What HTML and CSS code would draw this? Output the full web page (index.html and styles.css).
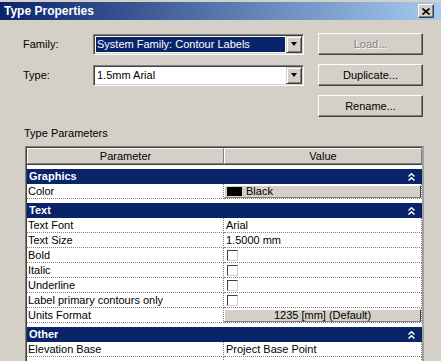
FILE: index.html
```html
<!DOCTYPE html>
<html>
<head>
<meta charset="utf-8">
<link rel="stylesheet" href="styles.css">
</head>
<body>
<div class="window">
  <div class="titlebar">
    <span class="title">Type Properties</span>
    <span class="close"><svg width="8" height="7" viewBox="0 0 8 7"><path d="M0.5 0.5 L7.5 6.5 M7.5 0.5 L0.5 6.5" stroke="#000" stroke-width="1.6" fill="none"/></svg></span>
  </div>
  <div class="form">
    <div class="lbl">Family:</div>
    <div class="combo"><div class="combo-text"><span class="sel">System Family: Contour Labels</span></div><div class="combo-btn"><span class="arrow"></span></div></div>
    <div class="btn disabled">Load...</div>
    <div class="lbl">Type:</div>
    <div class="combo"><div class="combo-text"><span class="plain">1.5mm Arial</span></div><div class="combo-btn"><span class="arrow"></span></div></div>
    <div class="btn">Duplicate...</div>
    <div></div>
    <div></div>
    <div class="btn">Rename...</div>
  </div>
  <div class="section-label">Type Parameters</div>
  <div class="grid">
    <div class="grid-head">
      <div class="hcell hparam">Parameter</div>
      <div class="hcell hvalue">Value</div>
    </div>
    <div class="group">
      <div class="group-head"><span>Graphics</span><svg class="chev" width="7" height="8" viewBox="0 0 7 8"><path d="M0.5 3.5 L3.5 0.8 L6.5 3.5 M0.5 7.5 L3.5 4.8 L6.5 7.5" stroke="#fff" stroke-width="1.5" fill="none"/></svg></div>
      <div class="row"><div class="pcell">Color</div><div class="vcell"><div class="vbtn left"><span class="swatch"></span>Black</div></div></div>
    </div>
    <div class="group">
      <div class="group-head"><span>Text</span><svg class="chev" width="7" height="8" viewBox="0 0 7 8"><path d="M0.5 3.5 L3.5 0.8 L6.5 3.5 M0.5 7.5 L3.5 4.8 L6.5 7.5" stroke="#fff" stroke-width="1.5" fill="none"/></svg></div>
      <div class="row"><div class="pcell">Text Font</div><div class="vcell">Arial</div></div>
      <div class="row"><div class="pcell">Text Size</div><div class="vcell">1.5000 mm</div></div>
      <div class="row"><div class="pcell">Bold</div><div class="vcell"><span class="check"></span></div></div>
      <div class="row"><div class="pcell">Italic</div><div class="vcell"><span class="check"></span></div></div>
      <div class="row"><div class="pcell">Underline</div><div class="vcell"><span class="check"></span></div></div>
      <div class="row"><div class="pcell">Label primary contours only</div><div class="vcell"><span class="check"></span></div></div>
      <div class="row"><div class="pcell">Units Format</div><div class="vcell"><div class="vbtn center">1235 [mm] (Default)</div></div></div>
    </div>
    <div class="group">
      <div class="group-head"><span>Other</span><svg class="chev" width="7" height="8" viewBox="0 0 7 8"><path d="M0.5 3.5 L3.5 0.8 L6.5 3.5 M0.5 7.5 L3.5 4.8 L6.5 7.5" stroke="#fff" stroke-width="1.5" fill="none"/></svg></div>
      <div class="row"><div class="pcell">Elevation Base</div><div class="vcell">Project Base Point</div></div>
      <div class="row"><div class="pcell"></div><div class="vcell"></div></div>
    </div>
  </div>
</div>
</body>
</html>
```
FILE: styles.css
```css
html, body {
  margin: 0;
  padding: 0;
}
body {
  background: #d4d0c8;
  font-family: "Liberation Sans", Arial, sans-serif;
  font-size: 11px;
  color: #000;
}
.window {
  width: 441px;
  height: 361px;
  overflow: hidden;
  background: #d4d0c8;
  padding-top: 2px;
  box-sizing: border-box;
}
.titlebar {
  height: 18px;
  background: linear-gradient(to right, #0a246a, #a6caf0);
  display: flex;
  align-items: center;
  justify-content: space-between;
  padding: 0 7px 0 4px;
}
.title {
  color: #fff;
  font-weight: bold;
  font-size: 12px;
  line-height: 18px;
}
.close {
  width: 16px;
  height: 14px;
  box-sizing: border-box;
  background: #d4d0c8;
  border-top: 1px solid #fff;
  border-left: 1px solid #fff;
  border-right: 1px solid #404040;
  border-bottom: 1px solid #404040;
  box-shadow: inset -1px -1px 0 #808080;
  display: flex;
  align-items: center;
  justify-content: center;
}
.close svg { display: block; margin-right: 1px; }

.form {
  display: grid;
  grid-template-columns: 56px 211px 105px;
  grid-template-rows: 22px 22px 22px;
  column-gap: 14px;
  row-gap: 9px;
  padding: 13px 0 0 23px;
  align-items: center;
}
.lbl {
  line-height: 14px;
}
.combo {
  height: 21px;
  box-sizing: border-box;
  background: #fff;
  border-top: 1px solid #808080;
  border-left: 1px solid #808080;
  border-right: 1px solid #fff;
  border-bottom: 1px solid #fff;
  box-shadow: inset 1px 1px 0 #404040, inset -1px -1px 0 #d4d0c8;
  display: flex;
  padding: 1px;
}
.combo-text {
  flex: 1;
  display: flex;
  padding: 1px;
}
.combo-text span {
  flex: 1;
  line-height: 15px;
  padding-left: 1px;
  white-space: nowrap;
  overflow: hidden;
}
.sel {
  background: #0a246a;
  color: #fff;
}
.combo-btn {
  width: 16px;
  box-sizing: border-box;
  background: #d4d0c8;
  border-top: 1px solid #d4d0c8;
  border-left: 1px solid #d4d0c8;
  border-right: 1px solid #404040;
  border-bottom: 1px solid #404040;
  box-shadow: inset 1px 1px 0 #fff, inset -1px -1px 0 #808080;
  display: flex;
  align-items: center;
  justify-content: center;
}
.arrow {
  width: 0;
  height: 0;
  border-left: 3.5px solid transparent;
  border-right: 3.5px solid transparent;
  border-top: 4px solid #000;
}
.btn {
  height: 22px;
  box-sizing: border-box;
  background: #d4d0c8;
  border-top: 1px solid #fff;
  border-left: 1px solid #fff;
  border-right: 1px solid #404040;
  border-bottom: 1px solid #404040;
  box-shadow: inset -1px -1px 0 #808080;
  display: flex;
  align-items: center;
  justify-content: center;
  line-height: 14px;
}
.btn.disabled {
  color: #808080;
  text-shadow: 1px 1px 0 #fff;
}
.section-label {
  margin: 10px 0 0 24px;
  line-height: 13px;
}
.grid {
  margin: 6px 0 0 25px;
  width: 399px;
  box-sizing: border-box;
  border-top: 1px solid #808080;
  border-left: 1px solid #808080;
  border-right: 2px solid #a0a0a0;
  box-shadow: inset 1px 1px 0 #404040;
  padding: 1px 0 0 1px;
  background: #fff;
  height: 300px;
}
.grid-head {
  display: flex;
  border-bottom: 1px solid #404040;
}
.hcell {
  height: 16px;
  box-sizing: border-box;
  background: #d4d0c8;
  border-top: 1px solid #fff;
  border-left: 1px solid #fff;
  border-right: 1px solid #808080;
  border-bottom: 1px solid #808080;
  text-align: center;
  line-height: 14px;
}
.hparam { width: 197px; }
.hvalue { width: 198px; }
.group {
  margin-top: 4px;
}
.group-head {
  height: 15px;
  background: #0a246a;
  color: #fff;
  font-weight: bold;
  display: flex;
  align-items: center;
  justify-content: space-between;
  padding: 0 7px 0 2px;
  line-height: 15px;
}
.chev { display: block; }
.row {
  display: flex;
  height: 15px;
}
.pcell, .vcell {
  height: 15px;
  box-sizing: border-box;
  border-bottom: 1px dotted #808080;
  border-right: 1px dotted #808080;
  line-height: 14px;
  white-space: nowrap;
  overflow: hidden;
}
.pcell {
  width: 197px;
  padding-left: 1px;
}
.vcell {
  width: 198px;
  padding-left: 2px;
  display: flex;
  align-items: center;
}
.vbtn {
  margin-left: -2px;
  width: 197px;
  height: 13px;
  box-sizing: border-box;
  background: #d4d0c8;
  border-top: 1px solid #fff;
  border-left: 1px solid #fff;
  border-right: 1px solid #404040;
  border-bottom: 1px solid #808080;
  display: flex;
  align-items: center;
  line-height: 12px;
}
.vbtn.center { justify-content: center; }
.swatch {
  width: 15px;
  height: 9px;
  background: #000;
  margin: 0 4px 0 2px;
}
.check {
  width: 11px;
  height: 11px;
  box-sizing: border-box;
  margin-left: 1px;
  background: #fff;
  border-top: 1px solid #404040;
  border-left: 1px solid #404040;
  border-right: 1px solid #d4d0c8;
  border-bottom: 1px solid #d4d0c8;
}
```
